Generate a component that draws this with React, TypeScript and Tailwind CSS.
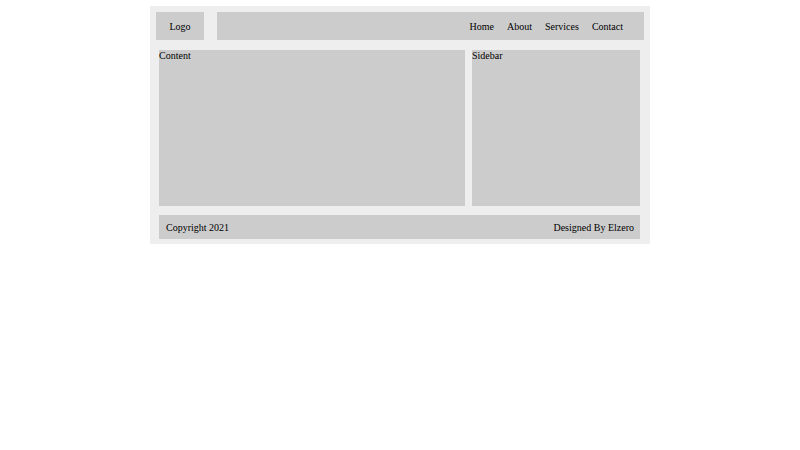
export default function App() {
  const links = ["Home", "About", "Services", "Contact"];

  return (
    <div className="min-h-screen bg-white pt-[6px] text-[10px] leading-[normal] text-black" style={{ fontFamily: '"Liberation Serif", "Times New Roman", serif' }}>
      <div className="mx-auto w-[500px] bg-[#eeeeee] px-[6px] pt-[6px] pb-[5px]">
        {/* Header */}
        <header className="flex h-[28px] gap-[13px]">
          <div className="flex w-[48px] items-center justify-center bg-[#cccccc]">Logo</div>
          <nav className="flex flex-1 items-center justify-end gap-[13px] bg-[#cccccc] pr-[21px]">
            {links.map((link) => (
              <a key={link} href="#">
                {link}
              </a>
            ))}
          </nav>
        </header>

        {/* Main */}
        <div className="mt-[10px] flex h-[156px] gap-[7px] pl-[3px] pr-[4px]">
          <section className="w-[306px] bg-[#cccccc]">Content</section>
          <aside className="flex-1 bg-[#cccccc]">Sidebar</aside>
        </div>

        {/* Footer */}
        <footer className="mt-[9px] ml-[3px] mr-[4px] flex h-[24px] items-center justify-between bg-[#cccccc] pl-[7px] pr-[6px]">
          <span>Copyright 2021</span>
          <span>Designed By Elzero</span>
        </footer>
      </div>
    </div>
  );
}
